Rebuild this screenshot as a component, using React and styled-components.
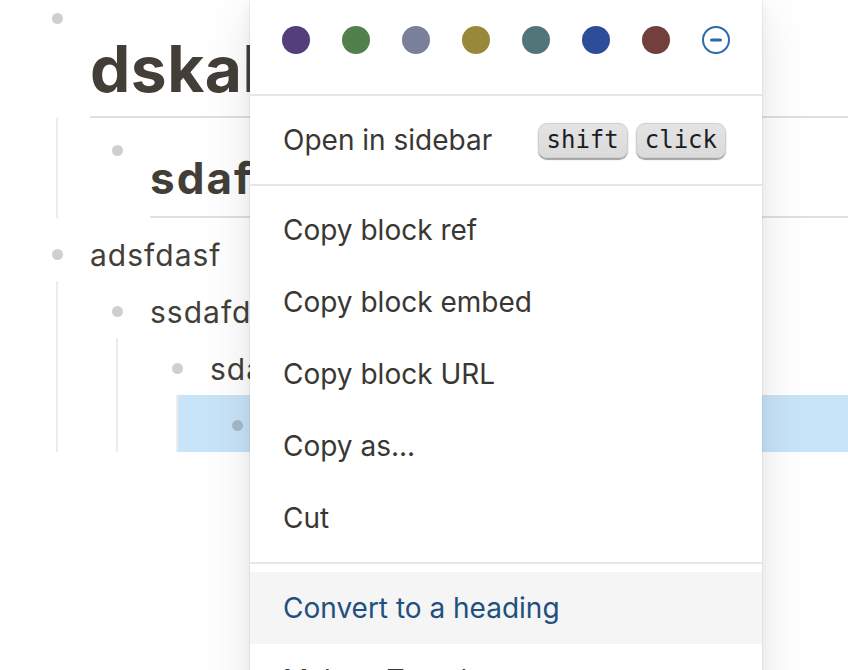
import React from 'react';
import styled, { createGlobalStyle } from 'styled-components';

const GlobalStyle = createGlobalStyle`
  body {
    margin: 0;
    background: #ffffff;
    font-family: Inter, 'Noto Sans', sans-serif;
  }
`;

const Page = styled.div`
  position: relative;
  height: 670px;
  overflow: hidden;
  background: #ffffff;
`;

const Outline = styled.div`
  padding-left: 2px;
  color: #433f38;
`;

const BlockWrap = styled.div`
  padding-left: ${(p) => (p.$nested ? '4px' : '0')};
  background: ${(p) => (p.$selected ? '#c8e4f9' : 'transparent')};
`;

const Row = styled.div`
  display: flex;
  margin-bottom: ${(p) => (p.$kind === 'h2' ? '6px' : '0')};
`;

const BulletCell = styled.div`
  width: 88px;
  flex-shrink: 0;
  padding-left: 50px;
  box-sizing: border-box;
`;

const Bullet = styled.span`
  display: block;
  width: 11px;
  height: 11px;
  border-radius: 50%;
  margin-top: ${(p) => p.$top}px;
  background: ${(p) => (p.$selected ? '#a8bac8' : '#cfcfcf')};
`;

const Heading1 = styled.div`
  flex: 1;
  font-size: 64px;
  font-weight: 700;
  line-height: 77px;
  letter-spacing: 0.5px;
  padding: 30px 0 9px;
  border-bottom: 2px solid #e0e0e0;
  white-space: nowrap;
`;

const Heading2 = styled.div`
  flex: 1;
  font-size: 44px;
  font-weight: 700;
  line-height: 53px;
  letter-spacing: 2px;
  padding: 34px 0 11px;
  border-bottom: 2px solid #e0e0e0;
  white-space: nowrap;
`;

const Text = styled.div`
  flex: 1;
  height: 57px;
  box-sizing: border-box;
  font-size: 30px;
  line-height: 51px;
  letter-spacing: 1px;
  padding-top: 6px;
  white-space: nowrap;
`;

const Children = styled.div`
  margin-left: 54px;
  border-left: 2px solid #ececec;
`;

const bulletTop = { h1: 13, h2: 27, text: 25 };

const Block = ({ node, nested }) => {
  const kind = node.kind || 'text';
  const Content = kind === 'h1' ? Heading1 : kind === 'h2' ? Heading2 : Text;
  return (
    <BlockWrap $nested={nested} $selected={node.selected}>
      <Row $kind={kind}>
        <BulletCell>
          <Bullet $top={bulletTop[kind]} $selected={node.selected} />
        </BulletCell>
        <Content>{node.text}</Content>
      </Row>
      {node.children && (
        <Children>
          {node.children.map((c, i) => (
            <Block key={i} node={c} nested />
          ))}
        </Children>
      )}
    </BlockWrap>
  );
};

const tree = [
  { text: 'dskal', kind: 'h1', children: [{ text: 'sdaf', kind: 'h2' }] },
  {
    text: 'adsfdasf',
    children: [
      {
        text: 'ssdafd',
        children: [{ text: 'sda', children: [{ text: '', selected: true }] }],
      },
    ],
  },
];

/* context menu */

const Menu = styled.div`
  position: absolute;
  top: 0;
  left: 250px;
  width: 512px;
  height: 780px;
  background: #ffffff;
  box-shadow: 0 0 0 1px rgba(16, 22, 26, 0.04), 0 4px 10px rgba(16, 22, 26, 0.06),
    0 12px 48px rgba(16, 22, 26, 0.11);
  color: #3a3732;
`;

const ColorRow = styled.div`
  display: flex;
  gap: 32px;
  height: 94px;
  box-sizing: border-box;
  padding: 26px 0 0 32px;
`;

const Swatch = styled.span`
  width: 28px;
  height: 28px;
  border-radius: 50%;
  background: ${(p) => p.$color};
`;

const Divider = styled.div`
  height: 2px;
  background: #e6e6e6;
`;

const SidebarRow = styled.div`
  display: flex;
  align-items: center;
  justify-content: space-between;
  height: 88px;
  padding: 0 36px 0 33px;
  font-size: 28px;
`;

const Keys = styled.div`
  display: flex;
  gap: 8px;
`;

const Kbd = styled.kbd`
  display: inline-block;
  height: 35px;
  box-sizing: border-box;
  padding: 0 8px;
  border-radius: 9px;
  background: linear-gradient(#e4e4e4, #dadada);
  border: 1px solid #d0d0d0;
  box-shadow: 0 2px 1px #a3a3a3, 0 0 2px rgba(0, 0, 0, 0.08);
  font-family: 'DejaVu Sans Mono', monospace;
  font-size: 24px;
  line-height: 33px;
  color: #182026;
`;

const ItemList = styled.div`
  padding: 8px 0;
`;

const Item = styled.div`
  display: flex;
  align-items: center;
  height: 72px;
  padding-left: 33px;
  font-size: 28px;
  white-space: nowrap;
  background: ${(p) => (p.$active ? '#f5f5f5' : 'transparent')};
  color: ${(p) => (p.$active ? '#20507e' : 'inherit')};
`;

const MinusIcon = () => (
  <svg width="28" height="28" viewBox="0 0 28 28">
    <circle cx="14" cy="14" r="13" fill="none" stroke="#2d6aa9" strokeWidth="2" />
    <line x1="9.5" y1="14" x2="18.5" y2="14" stroke="#2d6aa9" strokeWidth="3" strokeLinecap="round" />
  </svg>
);

const colors = ['#553e7c', '#52804c', '#7a809a', '#978939', '#527678', '#2e4d98', '#733f3c'];

const ContextMenu = () => (
  <Menu>
    <ColorRow>
      {colors.map((c) => (
        <Swatch key={c} $color={c} />
      ))}
      <MinusIcon />
    </ColorRow>
    <Divider />
    <SidebarRow>
      Open in sidebar
      <Keys>
        <Kbd>shift</Kbd>
        <Kbd>click</Kbd>
      </Keys>
    </SidebarRow>
    <Divider />
    <ItemList>
      <Item>Copy block ref</Item>
      <Item>Copy block embed</Item>
      <Item>Copy block URL</Item>
      <Item>Copy as...</Item>
      <Item>Cut</Item>
    </ItemList>
    <Divider />
    <ItemList>
      <Item $active>Convert to a heading</Item>
      <Item>Make a Template</Item>
    </ItemList>
  </Menu>
);

export default function App() {
  return (
    <Page>
      <GlobalStyle />
      <Outline>
        {tree.map((n, i) => (
          <Block key={i} node={n} />
        ))}
      </Outline>
      <ContextMenu />
    </Page>
  );
}
